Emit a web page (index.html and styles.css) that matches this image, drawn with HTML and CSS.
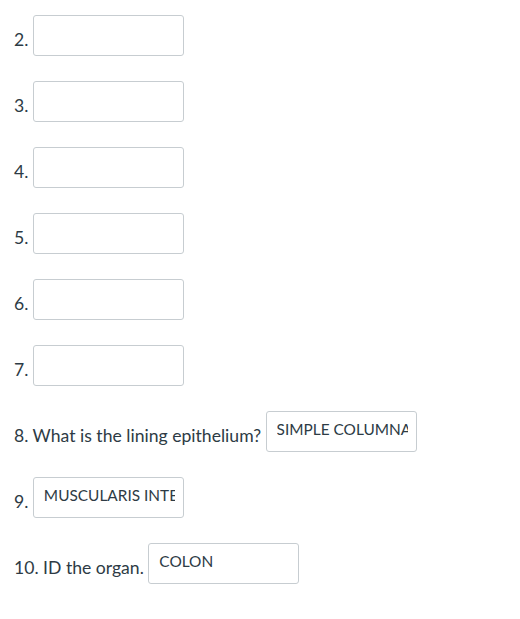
FILE: index.html
```html
<!DOCTYPE html>
<html>
<head>
<meta charset="utf-8">
<link rel="stylesheet" href="styles.css">
</head>
<body>
<div class="quiz">
  <div class="row"><span class="label">2.</span><input class="blank" type="text" value=""></div>
  <div class="row"><span class="label">3.</span><input class="blank" type="text" value=""></div>
  <div class="row"><span class="label">4.</span><input class="blank" type="text" value=""></div>
  <div class="row"><span class="label">5.</span><input class="blank" type="text" value=""></div>
  <div class="row"><span class="label">6.</span><input class="blank" type="text" value=""></div>
  <div class="row"><span class="label">7.</span><input class="blank" type="text" value=""></div>
  <div class="row"><span class="label">8. What is the lining epithelium?</span><input class="blank" type="text" value="SIMPLE COLUMNAR"></div>
  <div class="row"><span class="label">9.</span><input class="blank" type="text" value="MUSCULARIS INTERNA"></div>
  <div class="row"><span class="label">10. ID the organ.</span><input class="blank" type="text" value="COLON"></div>
</div>
</body>
</html>
```

FILE: styles.css
```css
html, body {
  margin: 0;
  padding: 0;
  background: #ffffff;
}
body {
  font-family: Lato, "Helvetica Neue", Arial, sans-serif;
  color: #2d3b45;
  font-size: 17.6px;
}
.quiz {
  display: flex;
  flex-direction: column;
  gap: 25px;
  padding: 15px 0 0 14px;
}
.row {
  display: flex;
  align-items: flex-end;
  gap: 4.5px;
}
.label {
  line-height: 24px;
  margin-bottom: 4px;
  white-space: nowrap;
}
.blank {
  box-sizing: border-box;
  width: 151px;
  height: 41px;
  margin: 0;
  padding: 8px 8px 13px 10px;
  border: 1px solid #c7cdd1;
  border-radius: 3px;
  background: #ffffff;
  font-family: Lato, "Helvetica Neue", Arial, sans-serif;
  font-size: 15.4px;
  color: #2d3b45;
  outline: none;
}
```
